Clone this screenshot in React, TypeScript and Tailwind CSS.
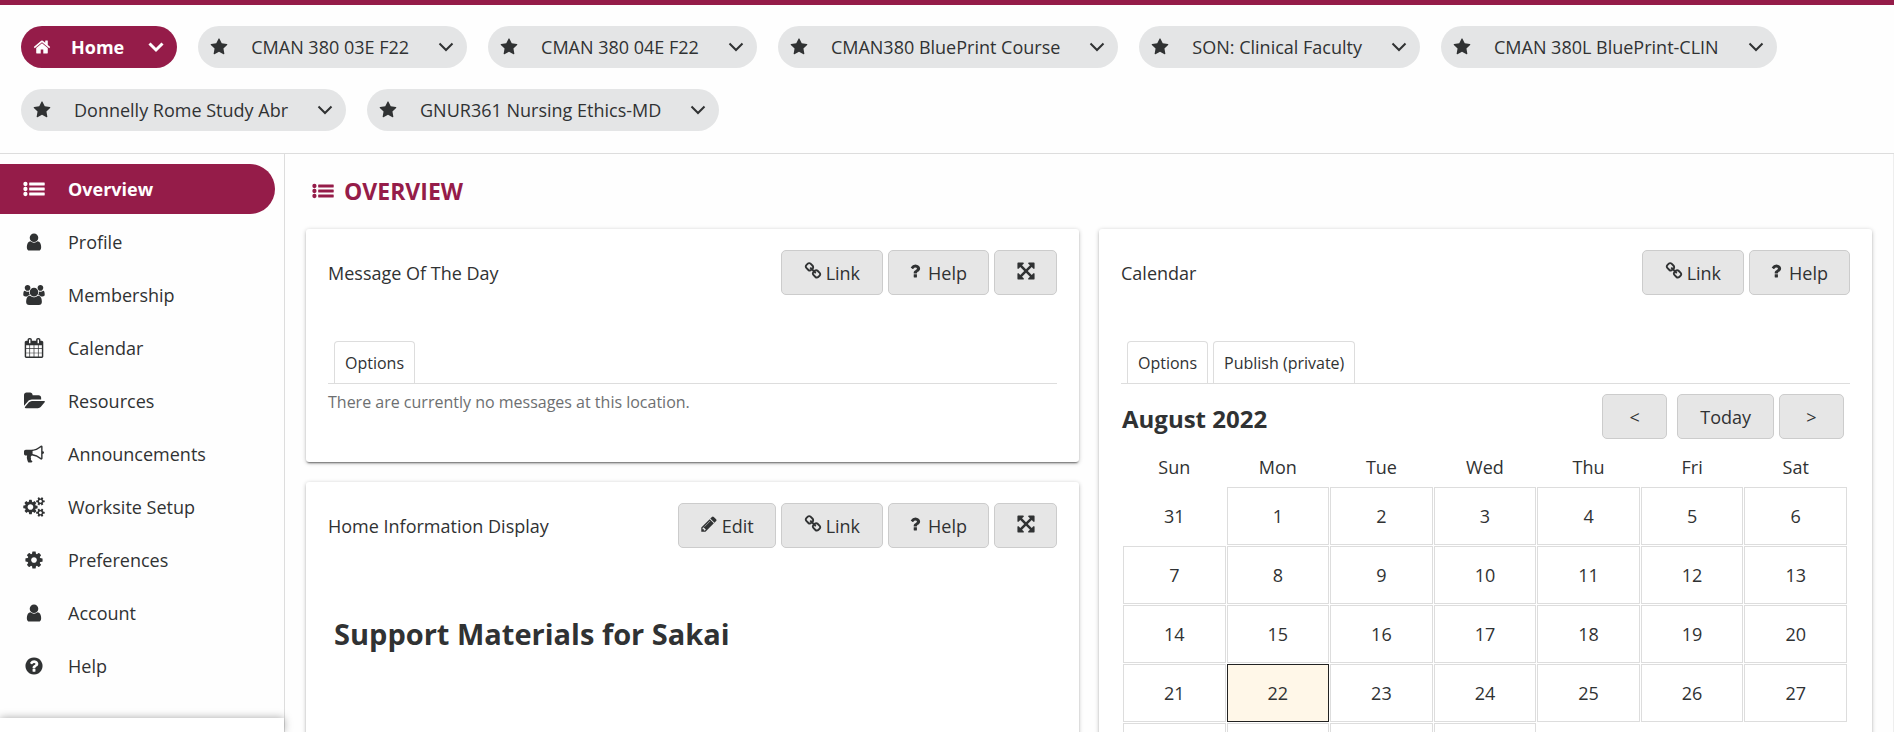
import type { ReactNode } from "react";

const icons = {
  home: "M1472 992v480q0 26-19 45t-45 19h-384v-384h-256v384h-384q-26 0-45-19t-19-45v-480q0-1 .5-3t.5-3l575-474 575 474q1 2 1 6zm223-69l-62 74q-8 9-21 11h-3q-13 0-21-7l-692-577-692 577q-12 8-24 7-13-2-21-11l-62-74q-8-10-7-23.5t11-21.5l719-599q32-26 76-26t76 26l244 204v-195q0-14 9-23t23-9h192q14 0 23 9t9 23v408l219 182q10 8 11 21.5t-7 23.5z",
  star: "M1728 647q0 22-26 48l-363 354 86 500q1 7 1 20 0 21-10.5 35.5t-30.5 14.5q-19 0-40-12l-449-236-449 236q-22 12-40 12-21 0-31.5-14.5t-10.5-35.5q0-6 2-20l86-500-364-354q-25-27-25-48 0-37 56-46l502-73 225-455q19-41 49-41t49 41l225 455 502 73q56 9 56 46z",
  list: "M-64 448a192 192 0 1 0 384 0a192 192 0 1 0-384 0zM-64 896a192 192 0 1 0 384 0a192 192 0 1 0-384 0zM-64 1344a192 192 0 1 0 384 0a192 192 0 1 0-384 0zM496 320h1328q32 0 32 32v192q0 32-32 32h-1328q-32 0-32-32v-192q0-32 32-32zM496 768h1328q32 0 32 32v192q0 32-32 32h-1328q-32 0-32-32v-192q0-32 32-32zM496 1216h1328q32 0 32 32v192q0 32-32 32h-1328q-32 0-32-32v-192q0-32 32-32z",
  user: "M1536 1399q0 109-62.5 187t-150.5 78h-854q-88 0-150.5-78t-62.5-187q0-85 8.5-160.5t31.5-152 58.5-131 94-89 134.5-34.5q131 128 313 128t313-128q76 0 134.5 34.5t94 89 58.5 131 31.5 152 8.5 160.5zm-256-887q0 159-112.5 271.5t-271.5 112.5-271.5-112.5-112.5-271.5 112.5-271.5 271.5-112.5 271.5 112.5 112.5 271.5z",
  users:
    "M529 896q-162 5-265 128h-134q-82 0-138-40.5t-56-118.5q0-353 124-353 6 0 43.5 21t97.5 42.5 119 21.5q67 0 133-23-5 37-5 66 0 139 81 256zm1071 637q0 120-73 189.5t-194 69.5h-874q-121 0-194-69.5t-73-189.5q0-53 3.5-103.5t14-109 26.5-108.5 43-97.5 62-81 85.5-53.5 111.5-20q10 0 43 21.5t73 48 107 48 135 21.5 135-21.5 107-48 73-48 43-21.5q61 0 111.5 20t85.5 53.5 62 81 43 97.5 26.5 108.5 14 109 3.5 103.5zm-1024-1277q0 106-75 181t-181 75-181-75-75-181 75-181 181-75 181 75 75 181zm704 384q0 159-112.5 271.5t-271.5 112.5-271.5-112.5-112.5-271.5 112.5-271.5 271.5-112.5 271.5 112.5 112.5 271.5zm576 225q0 78-56 118.5t-138 40.5h-134q-103-123-265-128 81-117 81-256 0-29-5-66 66 23 133 23 59 0 119-21.5t97.5-42.5 43.5-21q124 0 124 353zm-128-609q0 106-75 181t-181 75-181-75-75-181 75-181 181-75 181 75 75 181z",
  calendar:
    "M192 1664h288v-288h-288v288zm352 0h320v-288h-320v288zm-352-352h288v-320h-288v320zm352 0h320v-320h-320v320zm-352-384h288v-288h-288v288zm736 736h320v-288h-320v288zm-384-736h320v-288h-320v288zm768 736h288v-288h-288v288zm-384-352h320v-320h-320v320zm-352-864v-288q0-13-9.5-22.5t-22.5-9.5h-64q-13 0-22.5 9.5t-9.5 22.5v288q0 13 9.5 22.5t22.5 9.5h64q13 0 22.5-9.5t9.5-22.5zm736 864h288v-320h-288v320zm-384-384h320v-288h-320v288zm384 0h288v-288h-288v288zm32-480v-288q0-13-9.5-22.5t-22.5-9.5h-64q-13 0-22.5 9.5t-9.5 22.5v288q0 13 9.5 22.5t22.5 9.5h64q13 0 22.5-9.5t9.5-22.5zm384-64v1280q0 52-38 90t-90 38h-1408q-52 0-90-38t-38-90v-1280q0-52 38-90t90-38h128v-96q0-66 47-113t113-47h64q66 0 113 47t47 113v96h384v-96q0-66 47-113t113-47h64q66 0 113 47t47 113v96h128q52 0 90 38t38 90z",
  folder:
    "M1879 952q0 31-31 66l-336 396q-43 51-120.5 86.5t-143.5 35.5h-1088q-34 0-60.5-13t-26.5-43q0-31 31-66l336-396q43-51 120.5-86.5t143.5-35.5h1088q34 0 60.5 13t26.5 43zm-343-344v160h-832q-94 0-197 47.5t-164 119.5l-337 396-5 6q0-4-.5-12.5t-.5-12.5v-960q0-92 66-158t158-66h320q92 0 158 66t66 158v32h544q92 0 158 66t66 158z",
  bullhorn:
    "M1664 640q53 0 90.5 37.5t37.5 90.5-37.5 90.5-90.5 37.5v384q0 52-38 90t-90 38q-417-347-812-380-58 19-91 66t-31 100.5 40 92.5q-20 33-23 65.5t6 58 33.5 55 48 50 61.5 50.5q-29 58-111.5 83t-168.5 11.5-132-55.5q-7-23-29.5-87.5t-32-94.5-23-89-15-101 3.5-98.5 22-110.5h-122q-66 0-113-47t-47-113v-192q0-66 47-113t113-47h480q435 0 896-384 52 0 90 38t38 90v384zm-128 604v-954q-394 302-768 343v270q377 42 768 341z",
  cogs: "M832 896q0-106-75-181t-181-75-181 75-75 181 75 181 181 75 181-75 75-181zm768 512q0-52-38-90t-90-38-90 38-38 90q0 53 37.5 90.5t90.5 37.5 90.5-37.5 37.5-90.5zm0-1024q0-52-38-90t-90-38-90 38-38 90q0 53 37.5 90.5t90.5 37.5 90.5-37.5 37.5-90.5zm-384 421v185q0 10-7 19.5t-16 10.5l-155 24q-11 35-32 76 34 48 90 115 7 11 7 20 0 12-7 19-23 30-82.5 89.5t-78.5 59.5q-11 0-21-7l-115-90q-37 19-77 31-11 108-23 155-7 24-30 24h-186q-11 0-20-7.5t-10-17.5l-23-153q-34-10-75-31l-118 89q-7 7-20 7-11 0-21-8-144-133-144-160 0-9 7-19 10-14 41-53t47-61q-23-44-35-82l-152-24q-10-1-17-9.5t-7-19.5v-185q0-10 7-19.5t16-10.5l155-24q11-35 32-76-34-48-90-115-7-11-7-20 0-12 7-20 22-30 82-89t79-59q11 0 21 7l115 90q34-18 77-32 11-108 23-154 7-24 30-24h186q11 0 20 7.5t10 17.5l23 153q34 10 75 31l118-89q8-7 20-7 11 0 21 8 144 133 144 160 0 8-7 19-12 16-42 54t-45 60q23 48 34 82l152 23q10 2 17 10.5t7 19.5zm640 533v140q0 16-149 31-12 27-30 52 51 113 51 138 0 4-4 7-122 71-124 71-8 0-46-47t-52-68q-20 2-30 2t-30-2q-14 21-52 68t-46 47q-2 0-124-71-4-3-4-7 0-25 51-138-18-25-30-52-149-15-149-31v-140q0-16 149-31 13-29 30-52-51-113-51-138 0-4 4-7 4-2 35-20t59-34 30-16q8 0 46 46.5t52 67.5q20-2 30-2t30 2q51-71 92-112l6-2q4 0 124 70 4 3 4 7 0 25-51 138 17 23 30 52 149 15 149 31zm0-1024v140q0 16-149 31-12 27-30 52 51 113 51 138 0 4-4 7-122 71-124 71-8 0-46-47t-52-68q-20 2-30 2t-30-2q-14 21-52 68t-46 47q-2 0-124-71-4-3-4-7 0-25 51-138-18-25-30-52-149-15-149-31v-140q0-16 149-31 13-29 30-52-51-113-51-138 0-4 4-7 4-2 35-20t59-34 30-16q8 0 46 46.5t52 67.5q20-2 30-2t30 2q51-71 92-112l6-2q4 0 124 70 4 3 4 7 0 25-51 138 17 23 30 52 149 15 149 31z",
  cog: "M1152 896q0-106-75-181t-181-75-181 75-75 181 75 181 181 75 181-75 75-181zm512-109v222q0 12-8 23t-20 13l-185 28q-19 54-39 91 35 50 107 138 10 12 10 25t-9 23q-27 37-99 108t-94 71q-12 0-26-9l-138-108q-44 23-91 38-16 136-29 186-7 28-36 28h-222q-14 0-24.5-8.5t-11.5-21.5l-28-184q-49-16-90-37l-141 107q-10 9-25 9-14 0-25-11-126-114-165-168-7-10-7-23 0-12 8-23 15-21 51-66.5t54-70.5q-27-50-41-99l-183-27q-13-2-21-12.5t-8-23.5v-222q0-12 8-23t19-13l186-28q14-46 39-92-40-57-107-138-10-12-10-24 0-10 9-23 26-36 98.5-107.5t94.5-71.5q13 0 26 10l138 107q44-23 91-38 16-136 29-186 7-28 36-28h222q14 0 24.5 8.5t11.5 21.5l28 184q49 16 90 37l142-107q9-9 24-9 13 0 25 10 129 119 165 170 7 8 7 22 0 12-8 23-15 21-51 66.5t-54 70.5q26 50 41 98l183 28q13 2 21 12.5t8 23.5z",
  helpCircle:
    "M1024 1376v-192q0-14-9-23t-23-9h-192q-14 0-23 9t-9 23v192q0 14 9 23t23 9h192q14 0 23-9t9-23zm256-672q0-88-55.5-163t-138.5-116-170-41q-243 0-371 213-15 24 8 42l132 100q7 6 19 6 16 0 25-12 53-68 86-92 34-24 86-24 48 0 85.5 26t37.5 59q0 38-20 61t-68 45q-63 28-115.5 86.5t-52.5 125.5v36q0 14 9 23t23 9h192q14 0 23-9t9-23q0-19 21.5-49.5t54.5-49.5q32-18 49-28.5t46-35 44.5-48 28-60.5 12.5-81zm384 192q0 209-103 385.5t-279.5 279.5-385.5 103-385.5-103-279.5-279.5-103-385.5 103-385.5 279.5-279.5 385.5-103 385.5 103 279.5 279.5 103 385.5z",
  link: "M1520 1216q0-40-28-68l-208-208q-28-28-68-28-42 0-72 32 3 3 19 18.5t21.5 21.5 15 19 13 25.5 3.5 27.5q0 40-28 68t-68 28q-15 0-27.5-3.5t-25.5-13-19-15-21.5-21.5-18.5-19q-33 31-33 73 0 40 28 68l206 207q27 27 68 27 40 0 68-26l147-146q28-28 28-67zm-703-705q0-40-28-68l-206-207q-28-28-68-28-39 0-68 27l-147 146q-28 28-28 67 0 40 28 68l208 208q27 27 68 27 42 0 72-31-3-3-19-18.5t-21.5-21.5-15-19-13-25.5-3.5-27.5q0-40 28-68t68-28q15 0 27.5 3.5t25.5 13 19 15 21.5 21.5 18.5 19q33-31 33-73zm895 705q0 120-85 203l-147 146q-83 83-203 83-121 0-204-85l-206-207q-83-83-83-203 0-123 88-209l-88-88q-86 88-208 88-120 0-204-84l-208-208q-84-84-84-204t85-203l147-146q83-83 203-83 121 0 204 85l206 207q83 83 83 203 0 123-88 209l88 88q86-88 208-88 120 0 204 84l208 208q84 84 84 204z",
  question:
    "M1088 1256v240q0 16-12 28t-28 12h-240q-16 0-28-12t-12-28v-240q0-16 12-28t28-12h240q16 0 28 12t12 28zm316-600q0 54-15.5 101t-35 76.5-55 59.5-57.5 43.5-61 35.5q-41 23-68.5 65t-27.5 67q0 17-12 32.5t-28 15.5h-240q-15 0-25.5-18.5t-10.5-37.5v-45q0-83 65-156.5t143-108.5q59-27 84-56t25-76q0-42-46.5-74t-107.5-32q-65 0-108 29-35 25-107 115-13 16-31 16-12 0-25-8l-164-125q-13-10-15.5-25t5.5-28q160-266 464-266 80 0 161 31t146 83 106 127.5 41 158.5z",
  expand:
    "M1411 541l-355 355 355 355 144-144q29-31 70-14 39 17 39 59v448q0 26-19 45t-45 19h-448q-42 0-59-40-17-39 14-69l144-144-355-355-355 355 144 144q31 30 14 69-17 40-59 40h-448q-26 0-45-19t-19-45v-448q0-42 40-59 39-17 69 14l144 144 355-355-355-355-144 144q-19 19-45 19-12 0-24-5-40-17-40-59v-448q0-26 19-45t45-19h448q42 0 59 40 17 39-14 69l-144 144 355 355 355-355-144-144q-31-30-14-69 17-40 59-40h448q26 0 45 19t19 45v448q0 42-39 59-13 5-25 5-26 0-45-19z",
  pencil:
    "M491 1536l91-91-235-235-91 91v107h128v128h107zm523-928q0-22-22-22-10 0-17 7l-542 542q-7 7-7 17 0 22 22 22 10 0 17-7l542-542q7-7 7-17zm-54-192l416 416-832 832h-416v-416zm683 96q0 53-37 90l-166 166-416-416 166-165q36-38 90-38 53 0 91 38l235 234q37 39 37 91z",
};

type IconName = keyof typeof icons;

function Icon({ name, className }: { name: IconName; className: string }) {
  return (
    <svg
      viewBox="0 0 1792 1792"
      fill="currentColor"
      overflow="visible"
      className={`shrink-0 ${className}`}
      aria-hidden="true"
    >
      <path d={icons[name]} />
    </svg>
  );
}

function Chevron({ bold }: { bold?: boolean }) {
  return (
    <svg
      viewBox="0 0 16 16"
      fill="none"
      stroke="currentColor"
      strokeWidth={bold ? 3 : 2}
      className="h-4 w-4"
      aria-hidden="true"
    >
      <path d="M1.5 4.5L8 11l6.5-6.5" />
    </svg>
  );
}

const sites = [
  "CMAN 380 03E F22",
  "CMAN 380 04E F22",
  "CMAN380 BluePrint Course",
  "SON: Clinical Faculty",
  "CMAN 380L BluePrint-CLIN",
  "Donnelly Rome Study Abr",
  "GNUR361 Nursing Ethics-MD",
];

const tools: { name: string; icon: IconName }[] = [
  { name: "Overview", icon: "list" },
  { name: "Profile", icon: "user" },
  { name: "Membership", icon: "users" },
  { name: "Calendar", icon: "calendar" },
  { name: "Resources", icon: "folder" },
  { name: "Announcements", icon: "bullhorn" },
  { name: "Worksite Setup", icon: "cogs" },
  { name: "Preferences", icon: "cog" },
  { name: "Account", icon: "user" },
  { name: "Help", icon: "helpCircle" },
];

const days = ["Sun", "Mon", "Tue", "Wed", "Thu", "Fri", "Sat"];

const weeks = [
  [31, 1, 2, 3, 4, 5, 6],
  [7, 8, 9, 10, 11, 12, 13],
  [14, 15, 16, 17, 18, 19, 20],
  [21, 22, 23, 24, 25, 26, 27],
  [28, 29, 30, 31, 1, 2, 3],
];

function inMonth(week: number, day: number) {
  return !(week === 0 && day > 7) && !(week === 4 && day < 7);
}

function SiteTab({ name, active }: { name: string; active?: boolean }) {
  return (
    <li
      className={`flex h-[42px] items-center rounded-full pr-[13px] pl-3 ${
        active ? "bg-[#951c49] font-bold text-white" : "bg-[#e4e5e6]"
      }`}
    >
      <a href="#" className="flex items-center">
        <Icon name={active ? "home" : "star"} className="h-[18px] w-[18px]" />
        <span className={active ? "ml-5" : "ml-[23px]"}>{name}</span>
      </a>
      <button
        type="button"
        aria-label={`${name} tools`}
        className={`flex items-center ${active ? "ml-6" : "ml-[29px]"}`}
      >
        <Chevron bold={active} />
      </button>
    </li>
  );
}

function Button({
  children,
  className = "px-[22px]",
  label,
}: {
  children: ReactNode;
  className?: string;
  label?: string;
}) {
  return (
    <button
      type="button"
      aria-label={label}
      className={`flex h-[45px] items-center justify-center gap-1 rounded-[5px] border border-[#cccccc] bg-[#e6e6e6] ${className}`}
    >
      {children}
    </button>
  );
}

function Card({
  title,
  className = "",
  edit,
  expand,
  children,
}: {
  title: string;
  className?: string;
  edit?: boolean;
  expand?: boolean;
  children: ReactNode;
}) {
  return (
    <section
      className={`rounded-[3px] bg-white px-[22px] pt-[21px] shadow-[0_1px_4px_rgba(0,0,0,0.25),0_2px_2px_-1px_rgba(0,0,0,0.5)] ${className}`}
    >
      <div className="flex items-center justify-between">
        <h2>{title}</h2>
        <div className="flex gap-[5px]">
          {edit && (
            <Button className="px-[21px]">
              <Icon name="pencil" className="mb-1 h-[18px] w-[18px]" />
              Edit
            </Button>
          )}
          <Button>
            <Icon name="link" className="mb-1 h-[18px] w-[18px]" />
            Link
          </Button>
          <Button className="px-[21px]">
            <Icon name="question" className="-mx-1 mb-1 h-[18px] w-[18px]" />
            <span className="ml-1">Help</span>
          </Button>
          {expand && (
            <Button className="w-[63px]" label="Maximize">
              <Icon name="expand" className="mb-1 h-5 w-5" />
            </Button>
          )}
        </div>
      </div>
      {children}
    </section>
  );
}

function ToolTabs({ tabs }: { tabs: string[] }) {
  return (
    <ul className="mt-[46px] flex gap-[5px] border-b border-[#dddddd] px-[6px] text-base">
      {tabs.map((tab) => (
        <li key={tab}>
          <a
            href="#"
            className="flex h-[42px] items-center rounded-t border border-b-0 border-[#dddddd] px-[10px]"
          >
            {tab}
          </a>
        </li>
      ))}
    </ul>
  );
}

export default function App() {
  return (
    <div className="flex h-screen flex-col overflow-hidden bg-[#fefefe] font-['Open_Sans',sans-serif] text-lg text-[#303233]">
      <header className="border-t-[5px] border-b border-t-[#951c49] border-b-[#dddddd] px-[21px] pt-[21px] pb-[22px]">
        <ul className="flex flex-wrap gap-[21px]">
          <SiteTab name="Home" active />
          {sites.map((site) => (
            <SiteTab key={site} name={site} />
          ))}
        </ul>
      </header>

      <div className="flex min-h-0 flex-1">
        <nav className="flex w-[285px] shrink-0 flex-col border-r border-[#dddddd]">
          <ul className="flex flex-1 flex-col gap-[3px] pt-[10px]">
            {tools.map((tool, i) => (
              <li key={tool.name}>
                <a
                  href="#"
                  className={`flex h-[50px] items-center ${
                    i === 0
                      ? "mr-[9px] rounded-r-full bg-[#951c49] font-bold text-white"
                      : ""
                  }`}
                >
                  <span className="flex w-[68px] justify-center">
                    <Icon name={tool.icon} className="h-5 w-5" />
                  </span>
                  {tool.name}
                </a>
              </li>
            ))}
          </ul>
          <div className="h-[14px] bg-white shadow-[0_0_8px_rgba(0,0,0,0.35)]" />
        </nav>

        <main className="min-w-0 flex-1 overflow-y-auto border-r border-[#eeeeee] px-[21px] pt-5 pb-5 [scrollbar-width:none]">
          <h1 className="flex items-center gap-[11px] pt-px pl-[7px] text-[23px] leading-8 font-bold text-[#951c49]">
            <Icon name="list" className="h-5 w-5" />
            OVERVIEW
          </h1>

          <div className="mt-[22px] grid grid-cols-2 gap-5">
            <div className="flex flex-col gap-5">
              <Card title="Message Of The Day" expand className="h-[233px]">
                <ToolTabs tabs={["Options"]} />
                <p className="mt-[6px] text-base text-[#6d6f71]">
                  There are currently no messages at this location.
                </p>
              </Card>
              <Card
                title="Home Information Display"
                edit
                expand
                className="flex-1"
              >
                <h3 className="mt-[68px] px-[6px] text-[29px] leading-9 font-bold">
                  Support Materials for Sakai
                </h3>
              </Card>
            </div>

            <Card title="Calendar" className="pb-5">
              <ToolTabs tabs={["Options", "Publish (private)"]} />
              <div className="mt-[10px] flex items-center justify-between pr-[6px] pl-px">
                <h3 className="mt-1 text-2xl font-bold">August 2022</h3>
                <div className="flex gap-[5px]">
                  <Button className="mr-[5px] w-[65px]">&lt;</Button>
                  <Button>Today</Button>
                  <Button className="w-[65px]">&gt;</Button>
                </div>
              </div>
              <div className="mt-3 pr-[2px] pl-px">
                <table className="w-full table-fixed border-separate border-spacing-px text-center">
                  <thead>
                    <tr className="h-[34px]">
                      {days.map((day) => (
                        <th key={day} className="pb-1 font-normal">
                          {day}
                        </th>
                      ))}
                    </tr>
                  </thead>
                  <tbody>
                    {weeks.map((week, w) => (
                      <tr key={w} className="h-[58px]">
                        {week.map((day) => (
                          <td
                            key={day}
                            className={
                              day === 22
                                ? "border border-[#222222] bg-[#fff7e8]"
                                : inMonth(w, day)
                                  ? "border border-[#dddddd]"
                                  : ""
                            }
                          >
                            {day}
                          </td>
                        ))}
                      </tr>
                    ))}
                  </tbody>
                </table>
              </div>
            </Card>
          </div>
        </main>
      </div>
    </div>
  );
}
